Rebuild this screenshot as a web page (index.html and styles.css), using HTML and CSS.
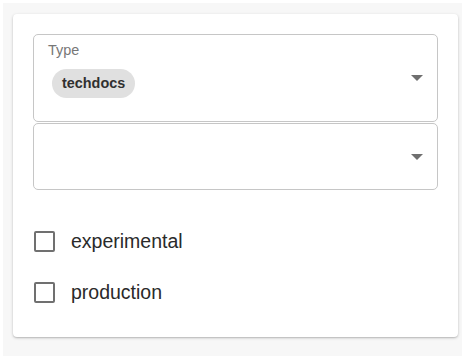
FILE: index.html
```html
<!DOCTYPE html>
<html>
<head>
<meta charset="utf-8">
<link rel="stylesheet" href="styles.css">
</head>
<body>
<div class="frame">
  <div class="card">
    <div class="select select-type">
      <div class="select-body">
        <span class="label">Type</span>
        <span class="chip">techdocs</span>
      </div>
      <span class="arrow"></span>
    </div>
    <div class="select select-empty">
      <div class="select-body"></div>
      <span class="arrow"></span>
    </div>
    <div class="checks">
      <label class="check"><span class="box"></span><span class="check-text">experimental</span></label>
      <label class="check"><span class="box"></span><span class="check-text">production</span></label>
    </div>
  </div>
</div>
</body>
</html>
```
FILE: styles.css
```css
html, body {
  margin: 0;
  padding: 0;
  background: #ffffff;
  font-family: "Liberation Sans", Arial, sans-serif;
}
.frame {
  margin: 3px 12px 3px 3px;
  background: #f7f7f7;
  padding: 11px 4px 19px 10px;
}
.card {
  background: #ffffff;
  border-radius: 4px;
  box-shadow: 0 1px 3px rgba(0,0,0,0.22), 0 1px 1px rgba(0,0,0,0.08);
  padding: 20px 20px 19px 20px;
  box-sizing: border-box;
  height: 323px;
}
.select {
  border: 1px solid #c6c6c6;
  border-radius: 5px;
  display: flex;
  align-items: center;
  box-sizing: border-box;
  padding: 0 14px 0 14px;
}
.select-type {
  height: 88px;
  margin-bottom: 1px;
}
.select-empty {
  height: 67px;
}
.select-body {
  flex: 1;
  display: flex;
  flex-direction: column;
  align-items: flex-start;
  align-self: stretch;
}
.label {
  font-size: 14.4px;
  color: #777777;
  margin-top: 7px;
  line-height: 16px;
}
.chip {
  margin-top: 11px;
  margin-left: 4px;
  background: #e0e0e0;
  border-radius: 15px;
  height: 29px;
  line-height: 29px;
  padding: 0 10px;
  font-size: 14.4px;
  font-weight: bold;
  color: #303030;
}
.arrow {
  width: 0;
  height: 0;
  border-left: 6px solid transparent;
  border-right: 6px solid transparent;
  border-top: 6px solid #6f6f6f;
}
.checks {
  margin-top: 26px;
  display: flex;
  flex-direction: column;
}
.check {
  height: 51px;
  display: flex;
  align-items: center;
  padding-left: 1px;
}
.box {
  width: 17px;
  height: 17px;
  border: 2px solid #707070;
  border-radius: 2px;
  margin-right: 16px;
}
.check-text {
  font-size: 19.5px;
  color: #2a2a2a;
}
```
